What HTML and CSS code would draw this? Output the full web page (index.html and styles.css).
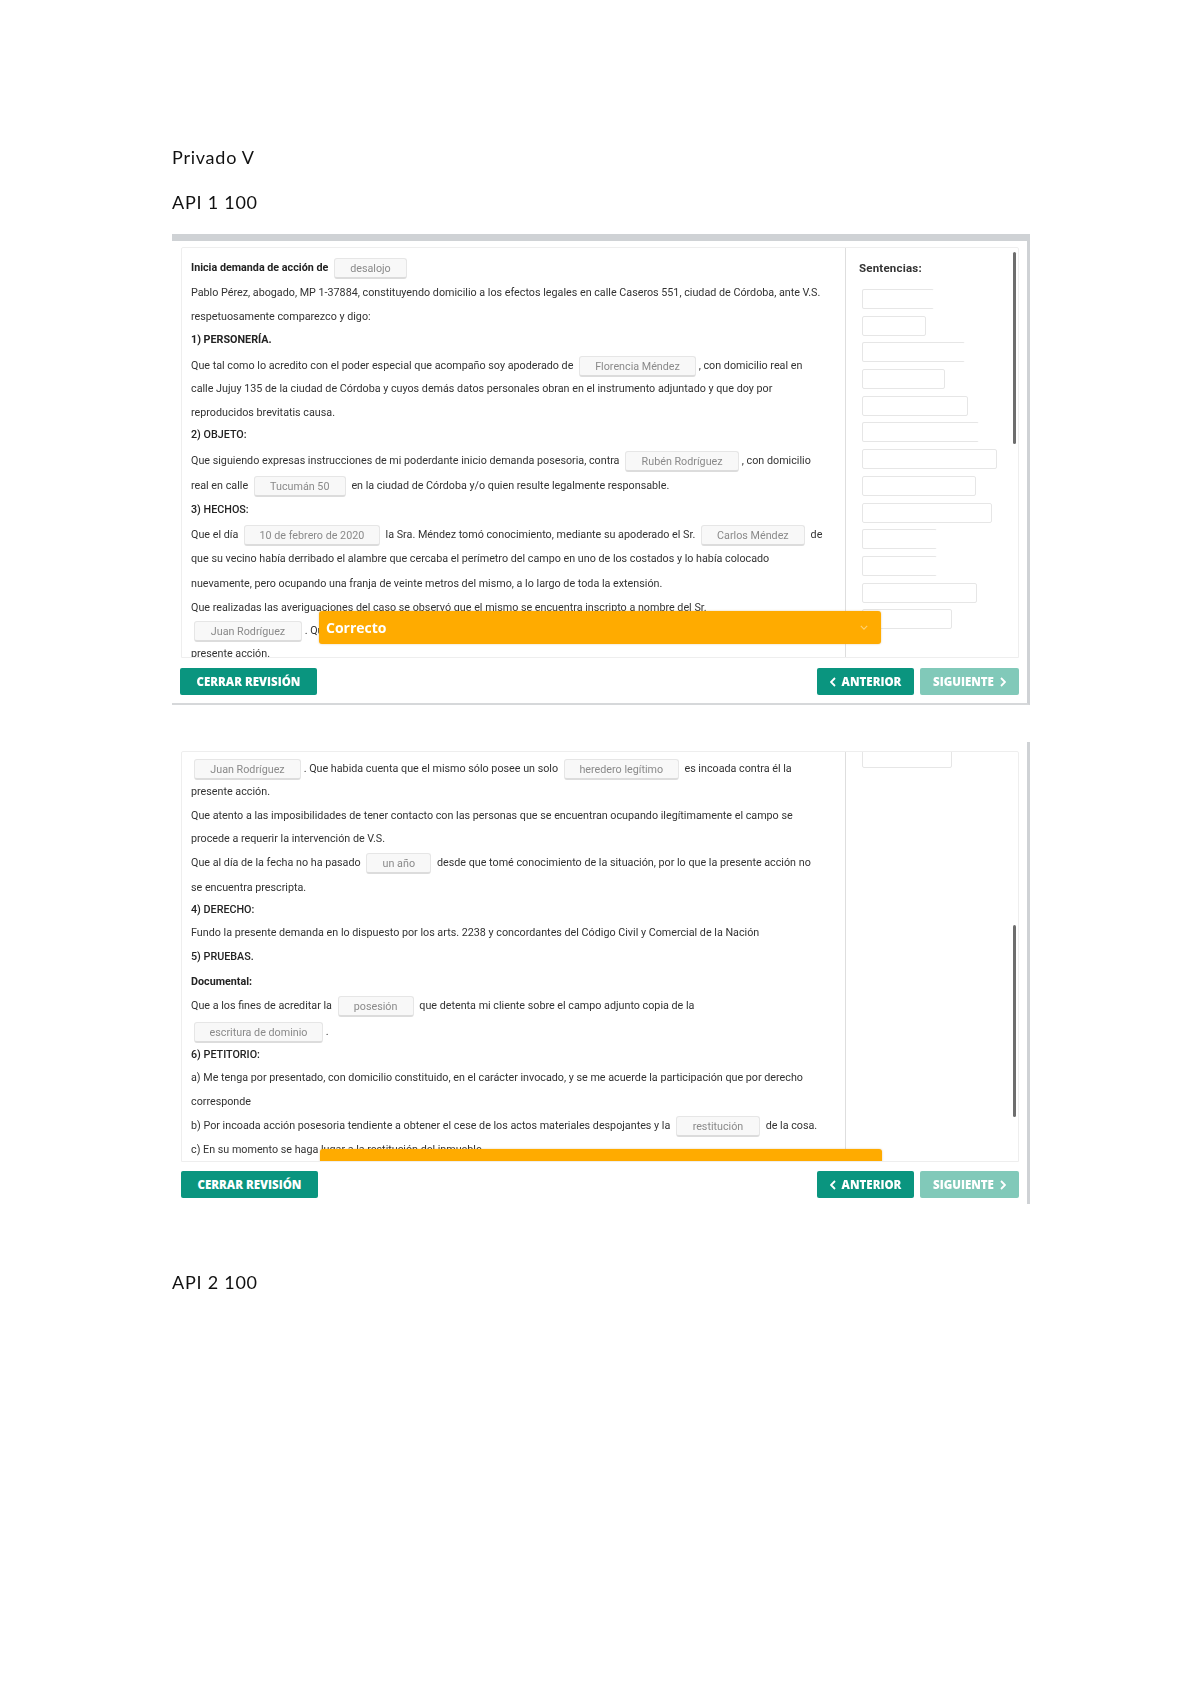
FILE: index.html
```html
<!DOCTYPE html>
<html lang="es">
<head>
<meta charset="utf-8">
<title>Privado V</title>
<link rel="stylesheet" href="styles.css">
</head>
<body>
<main class="page">
  <h1 class="doc-title">Privado V</h1>
  <h2 class="doc-title gap-heading">API 1 100</h2>

  <section class="panel panel-first">
    <div class="sheet">
      <div class="doc">
        <p class="ln g0 bold">Inicia demanda de acción de <span class="blank w73 ml3">desalojo</span></p>
        <p class="ln g5">Pablo Pérez, abogado, MP 1-37884, constituyendo domicilio a los efectos legales en calle Caseros 551, ciudad de Córdoba, ante V.S.</p>
        <p class="ln g4">respetuosamente comparezco y digo:</p>
        <p class="ln g3 bold">1) PERSONERÍA.</p>
        <p class="ln g6">Que tal como lo acredito con el poder especial que acompaño soy apoderado de <span class="blank w117 ml3">Florencia Méndez</span> , con domicilio real en</p>
        <p class="ln g3">calle Jujuy 135 de la ciudad de Córdoba y cuyos demás datos personales obran en el instrumento adjuntado y que doy por</p>
        <p class="ln g4">reproducidos brevitatis causa.</p>
        <p class="ln g2 semi">2) OBJETO:</p>
        <p class="ln g6">Que siguiendo expresas instrucciones de mi poderdante inicio demanda posesoria, contra <span class="blank w114 ml3">Rubén Rodríguez</span> , con domicilio</p>
        <p class="ln g5">real en calle <span class="blank w92 ml3">Tucumán 50</span> <span class="ml3">en la ciudad de Córdoba y/o quien resulte legalmente responsable.</span></p>
        <p class="ln g4 semi">3) HECHOS:</p>
        <p class="ln g5">Que el día <span class="blank w136 ml3">10 de febrero de 2020</span> <span class="ml3">la Sra. Méndez tomó conocimiento, mediante su apoderado el Sr.</span> <span class="blank w104 ml3">Carlos Méndez</span> <span class="ml3">de</span></p>
        <p class="ln g4">que su vecino había derribado el alambre que cercaba el perímetro del campo en uno de los costados y lo había colocado</p>
        <p class="ln g5">nuevamente, pero ocupando una franja de veinte metros del mismo, a lo largo de toda la extensión.</p>
        <p class="ln g4">Que realizadas las averiguaciones del caso se observó que el mismo se encuentra inscripto a nombre del Sr.</p>
        <p class="ln g3"><span class="blank w108 indent">Juan Rodríguez</span> . Que habida cuenta que el mismo sólo posee un solo</p>
        <p class="ln g3">presente acción.</p>
      </div>
      <aside class="side">
        <p class="side-title">Sentencias:</p>
        <div class="slots">
          <span class="slot open" style="width:72px"></span>
          <span class="slot" style="width:64px"></span>
          <span class="slot open" style="width:103px"></span>
          <span class="slot" style="width:83px"></span>
          <span class="slot" style="width:106px"></span>
          <span class="slot open" style="width:117px"></span>
          <span class="slot" style="width:135px"></span>
          <span class="slot" style="width:114px"></span>
          <span class="slot" style="width:130px"></span>
          <span class="slot open" style="width:75px"></span>
          <span class="slot open" style="width:75px"></span>
          <span class="slot" style="width:115px"></span>
          <span class="slot" style="width:90px"></span>
        </div>
      </aside>
      <span class="thumb thumb-first"></span>
      <div class="toast toast-first">
        <span>Correcto</span>
        <svg class="toast-chevron" viewBox="0 0 10 6" width="8" height="5"><path d="M1 1l4 4 4-4" fill="none" stroke="#ffd173" stroke-width="1.4"/></svg>
      </div>
    </div>
    <footer class="actions">
      <button class="btn btn-close btn-close-first">CERRAR REVISIÓN</button>
      <div class="nav">
        <button class="btn btn-prev"><svg viewBox="0 0 6 10" width="6" height="10"><path d="M5 1L1 5l4 4" fill="none" stroke="#fff" stroke-width="1.8"/></svg>ANTERIOR</button>
        <button class="btn btn-next">SIGUIENTE<svg viewBox="0 0 6 10" width="6" height="10"><path d="M1 1l4 4-4 4" fill="none" stroke="#fff" stroke-width="1.8"/></svg></button>
      </div>
    </footer>
  </section>

  <section class="panel panel-second">
    <div class="sheet">
      <div class="doc doc-second">
        <p class="ln g0"><span class="blank w107 indent">Juan Rodríguez</span> . Que habida cuenta que el mismo sólo posee un solo <span class="blank w115 ml3">heredero legítimo</span> <span class="ml3">es incoada contra él la</span></p>
        <p class="ln g3">presente acción.</p>
        <p class="ln g4">Que atento a las imposibilidades de tener contacto con las personas que se encuentran ocupando ilegítimamente el campo se</p>
        <p class="ln g3">procede a requerir la intervención de V.S.</p>
        <p class="ln g4">Que al día de la fecha no ha pasado <span class="blank w65 ml3">un año</span> <span class="ml3">desde que tomé conocimiento de la situación, por lo que la presente acción no</span></p>
        <p class="ln g5">se encuentra prescripta.</p>
        <p class="ln g2 semi">4) DERECHO:</p>
        <p class="ln g3">Fundo la presente demanda en lo dispuesto por los arts. 2238 y concordantes del Código Civil y Comercial de la Nación</p>
        <p class="ln g4 semi">5) PRUEBAS.</p>
        <p class="ln g5 bold">Documental:</p>
        <p class="ln g4">Que a los fines de acreditar la <span class="blank w76 ml3">posesión</span> <span class="ml3">que detenta mi cliente sobre el campo adjunto copia de la</span></p>
        <p class="ln g6"><span class="blank w129 indent">escritura de dominio</span> .</p>
        <p class="ln g3 semi">6) PETITORIO:</p>
        <p class="ln g3">a) Me tenga por presentado, con domicilio constituido, en el carácter invocado, y se me acuerde la participación que por derecho</p>
        <p class="ln g4">corresponde</p>
        <p class="ln g4">b) Por incoada acción posesoria tendiente a obtener el cese de los actos materiales despojantes y la <span class="blank w84 ml3">restitución</span> <span class="ml3">de la cosa.</span></p>
        <p class="ln g4">c) En su momento se haga lugar a la restitución del inmueble</p>
      </div>
      <aside class="side side-second">
        <span class="slot slot-cut" style="width:90px"></span>
      </aside>
      <span class="thumb thumb-second"></span>
      <div class="toast toast-second"></div>
    </div>
    <footer class="actions actions-second">
      <button class="btn btn-close">CERRAR REVISIÓN</button>
      <div class="nav">
        <button class="btn btn-prev"><svg viewBox="0 0 6 10" width="6" height="10"><path d="M5 1L1 5l4 4" fill="none" stroke="#fff" stroke-width="1.8"/></svg>ANTERIOR</button>
        <button class="btn btn-next">SIGUIENTE<svg viewBox="0 0 6 10" width="6" height="10"><path d="M1 1l4 4-4 4" fill="none" stroke="#fff" stroke-width="1.8"/></svg></button>
      </div>
    </footer>
  </section>

  <h2 class="doc-title gap-api2">API 2 100</h2>
</main>
</body>
</html>
```
FILE: styles.css
```css
* { box-sizing: border-box; }
html, body { margin: 0; background: #fff; }
body { height: 1698px; overflow: hidden; }
p { margin: 0; }

.page { width: 858px; margin-left: 172px; padding-top: 145px; }

.doc-title {
  margin: 0;
  font: 400 18px/24px Lato, "Liberation Sans", sans-serif;
  letter-spacing: .75px;
  color: #111;
  filter: blur(.3px);
}
.gap-heading { margin-top: 21px; }
.gap-api2 { margin-top: 66px; }

.panel {
  margin-top: 20px;
  padding: 6px 8px 8px 9px;
  height: 471px;
  border-top: 7px solid #cfd2d5;
  border-right: 3px solid #cfd2d5;
  border-bottom: 2px solid #d6d8da;
  filter: blur(.5px);
  font-family: Roboto, "Liberation Sans", sans-serif;
}
.panel-second {
  margin-top: 37px;
  padding-top: 9px;
  padding-bottom: 6px;
  height: 462px;
  border-top: 0;
  border-bottom: 0;
}

.sheet {
  position: relative;
  display: flex;
  height: 411px;
  overflow: hidden;
  border: 1px solid #eeeeee;
  border-radius: 2px 2px 0 0;
}

.doc {
  width: 663px;
  padding: 10px 0 0 9px;
  font-size: 10.75px;
  line-height: 20px;
  color: #333;
  white-space: nowrap;
}
.doc-second { padding-top: 7px; }

.ln { height: 20px; }
.g0 { margin-top: 0; }
.g2 { margin-top: 2px; }
.g3 { margin-top: 3px; }
.g4 { margin-top: 4px; }
.g5 { margin-top: 5px; }
.g6 { margin-top: 6px; }
.bold { font-weight: 700; color: #222; }
.semi { font-weight: 500; color: #222; }

.blank {
  display: inline-block;
  height: 21px;
  vertical-align: middle;
  line-height: 20px;
  text-align: center;
  font-weight: 400;
  color: #8a8a8a;
  background: #f8f8f8;
  border: 1px solid #e6e6e6;
  border-bottom: 2px solid #dcdcdc;
  border-radius: 3px;
}
.w65 { width: 65px; }
.w73 { width: 73px; }
.w76 { width: 76px; }
.w84 { width: 84px; }
.w92 { width: 92px; }
.w104 { width: 104px; }
.w107 { width: 107px; }
.w108 { width: 108px; }
.w114 { width: 114px; }
.w115 { width: 115px; }
.w117 { width: 117px; }
.w129 { width: 129px; }
.w136 { width: 136px; }
.ml3 { margin-left: 3px; }
.indent { margin-left: 3px; }

.side {
  flex: 1;
  padding: 10px 0 0 13px;
  border-left: 1px solid #dedede;
}
.side-title {
  font: 700 11.5px/20px Roboto, "Liberation Sans", sans-serif;
  letter-spacing: .2px;
  color: #333;
}
.slots {
  display: flex;
  flex-direction: column;
  gap: 6.7px;
  margin: 11px 0 0 3px;
}
.slot {
  display: block;
  height: 20px;
  border: 1px solid #e6e6e6;
  border-radius: 2px;
  background: #fff;
}
.open { border-right-color: transparent; }
.side-second { padding-top: 0; }
.slot-cut { margin: -4px 0 0 3px; }

.thumb {
  position: absolute;
  right: 2px;
  width: 3px;
  height: 192px;
  border-radius: 2px;
  background: #6e6e6e;
}
.thumb-first { top: 4px; }
.thumb-second { top: 173px; }

.toast {
  position: absolute;
  display: flex;
  align-items: center;
  justify-content: space-between;
  width: 562px;
  height: 33px;
  padding: 0 13px 0 7px;
  background: #ffab00;
  border-radius: 3px;
  box-shadow: 0 0 2px rgba(180, 120, 0, .4);
  color: #fff;
  font: 700 14px/33px "Open Sans", "Liberation Sans", sans-serif;
}
.toast-first { left: 137px; top: 363px; }
.toast-second { left: 138px; top: 397px; }

.actions {
  display: flex;
  justify-content: space-between;
  margin-top: 10px;
}
.actions-second { margin-top: 9px; }
.nav { display: flex; gap: 6px; }

.btn {
  display: flex;
  align-items: center;
  justify-content: center;
  gap: 6px;
  height: 27px;
  padding: 0;
  border: 0;
  border-radius: 2px;
  color: #fff;
  background: #0a957f;
  font: 800 11.5px/27px "Open Sans", "Liberation Sans", sans-serif;
}
.btn-close { width: 137px; }
.btn-close-first { margin-left: -1px; }
.btn-prev { width: 97px; }
.btn-next { width: 99px; background: #81c9b9; }
```
